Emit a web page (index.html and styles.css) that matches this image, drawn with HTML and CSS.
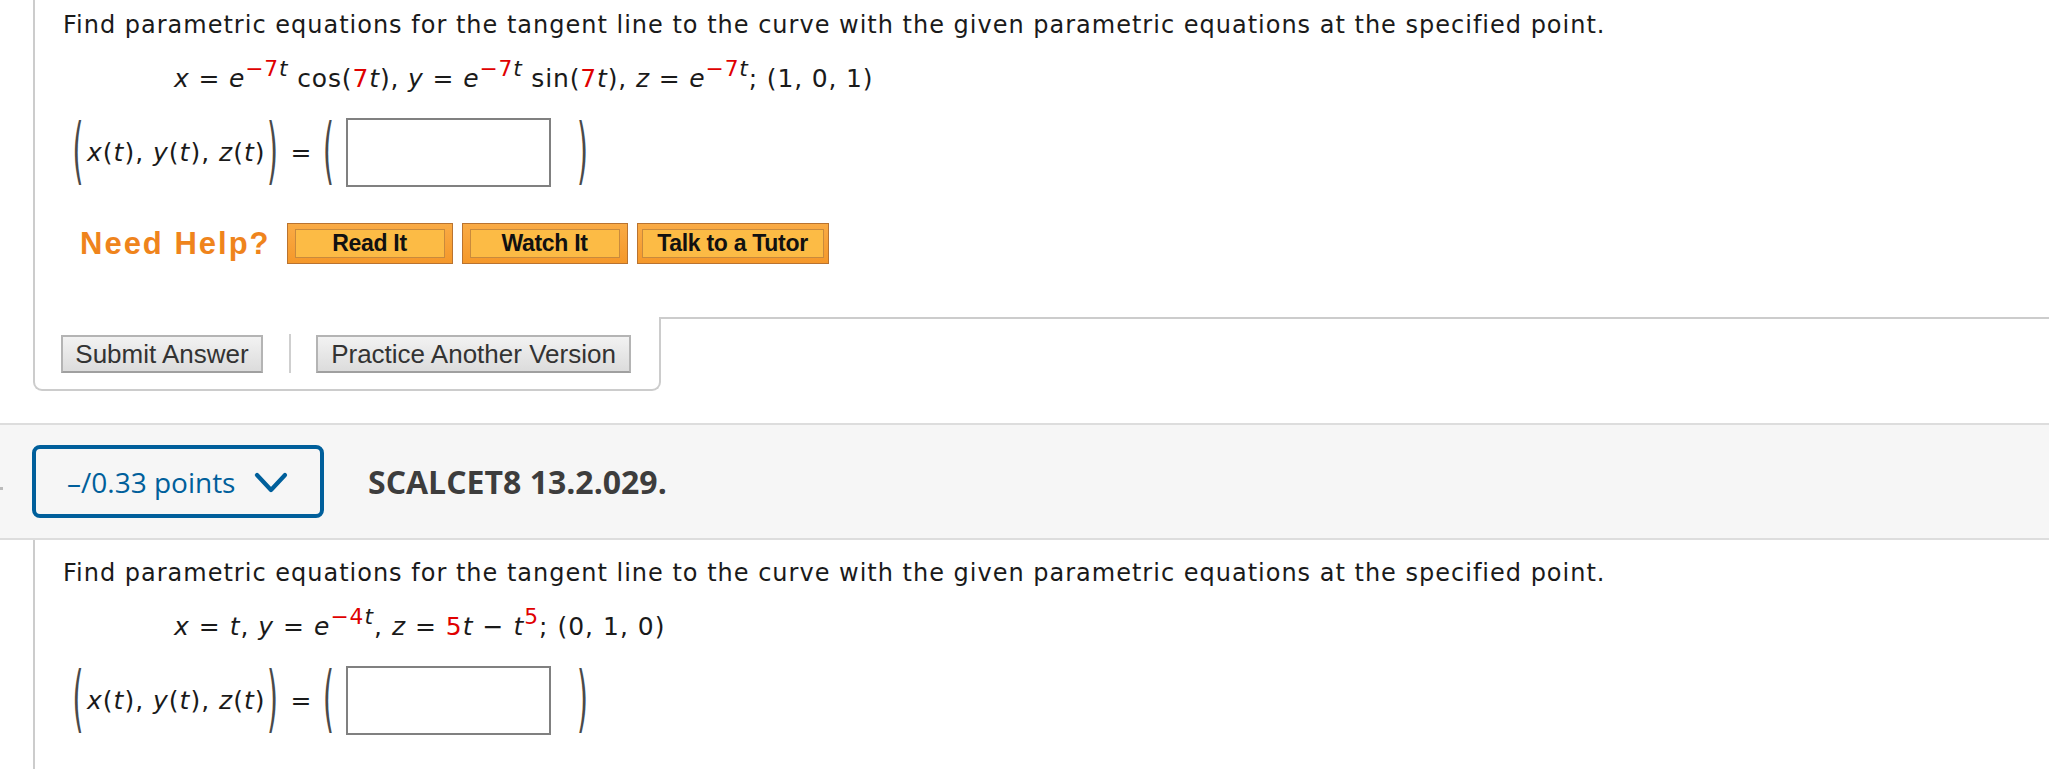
FILE: index.html
```html
<!DOCTYPE html>
<html>
<head>
<meta charset="utf-8">
<link rel="stylesheet" href="styles.css">
</head>
<body>
<div class="q q1">
  <div class="qbody">
    <p class="prompt">Find parametric equations for the tangent line to the curve with the given parametric equations at the specified point.</p>
    <div class="eq"><i>x</i> = <i>e</i><span class="sup"><span class="red">−7</span><i>t</i></span> cos(<span class="red">7</span><i>t</i>), <i>y</i> = <i>e</i><span class="sup"><span class="red">−7</span><i>t</i></span> sin(<span class="red">7</span><i>t</i>), <i>z</i> = <i>e</i><span class="sup"><span class="red">−7</span><i>t</i></span>; (1, 0, 1)</div>
    <div class="ans">
      <span class="paren p1">(</span><span class="mtext"><i>x</i>(<i>t</i>), <i>y</i>(<i>t</i>), <i>z</i>(<i>t</i>)</span><span class="paren p2">)</span>
      <span class="equals">=</span>
      <span class="paren p3">(</span><span class="box"></span><span class="paren p4">)</span>
    </div>
    <div class="help">
      <span class="need">Need Help?</span>
      <span class="hbtn"><span class="hin">Read It</span></span>
      <span class="hbtn"><span class="hin">Watch It</span></span>
      <span class="hbtn tutor"><span class="hin">Talk to a Tutor</span></span>
    </div>
  </div>
  <div class="footrow">
    <div class="actions">
      <span class="gbtn submit">Submit Answer</span>
      <span class="sep"></span>
      <span class="gbtn practice">Practice Another Version</span>
    </div>
    <div class="fill"></div>
  </div>
</div>

<div class="band">
  <span class="tick"></span>
  <span class="points">–/0.33 points
    <svg class="chev" width="34" height="22" viewBox="0 0 34 22"><path d="M3 3 L17 18 L31 3" fill="none" stroke="#005f9b" stroke-width="4.2" stroke-linecap="round" stroke-linejoin="round"/></svg>
  </span>
  <span class="qid">SCALCET8 13.2.029.</span>
</div>

<div class="q q2">
  <div class="qbody">
    <p class="prompt">Find parametric equations for the tangent line to the curve with the given parametric equations at the specified point.</p>
    <div class="eq"><i>x</i> = <i>t</i>, <i>y</i> = <i>e</i><span class="sup"><span class="red">−4</span><i>t</i></span>, <i>z</i> = <span class="red">5</span><i>t</i> − <i>t</i><span class="sup"><span class="red">5</span></span>; (0, 1, 0)</div>
    <div class="ans">
      <span class="paren p1">(</span><span class="mtext"><i>x</i>(<i>t</i>), <i>y</i>(<i>t</i>), <i>z</i>(<i>t</i>)</span><span class="paren p2">)</span>
      <span class="equals">=</span>
      <span class="paren p3">(</span><span class="box"></span><span class="paren p4">)</span>
    </div>
  </div>
</div>
</body>
</html>
```

FILE: styles.css
```css
html, body {
  margin: 0;
  padding: 0;
  background: #fff;
  overflow: hidden;
}
body {
  font-family: "DejaVu Sans", Verdana, sans-serif;
  color: #222;
  width: 2049px;
  height: 769px;
}
.q {
  margin-left: 33px;
}
.qbody {
  border-left: 2px solid #cccccc;
  padding: 10px 0 53px 28px;
}
.q2 .qbody {
  padding-top: 18px;
  padding-bottom: 40px;
}
.prompt {
  margin: 0;
  font-size: 24px;
  line-height: 30px;
  letter-spacing: 1px;
  color: #1a1a1a;
}
.eq {
  margin: 24px 0 0 111px;
  font-size: 25px;
  line-height: 30px;
  letter-spacing: 1px;
  color: #1a1a1a;
  white-space: nowrap;
}
.q1 .eq {
  letter-spacing: 0.85px;
}
.eq i, .mtext i {
  font-style: italic;
}
.sup {
  font-size: 0.87em;
  vertical-align: 11px;
  line-height: 0;
}
.red {
  color: #e00000;
}
.ans {
  margin-top: 24px;
  display: flex;
  align-items: center;
  font-size: 25px;
  letter-spacing: 1px;
  color: #1a1a1a;
}
.paren {
  display: inline-block;
  font-size: 28px;
  letter-spacing: 0;
  color: #4a4a4a;
  transform: scaleY(2.6);
  width: 14px;
  text-align: center;
  line-height: 30px;
}
.p1 {
  margin-left: 8px;
}
.mtext {
  margin-left: 2px;
}
.p2 {
  margin-left: 0;
}
.equals {
  margin-left: 11px;
  letter-spacing: 0;
}
.p3 {
  margin-left: 10px;
}
.box {
  display: inline-block;
  box-sizing: border-box;
  width: 205px;
  height: 69px;
  border: 2px solid #808080;
  background: #fff;
  margin-left: 11px;
}
.p4 {
  margin-left: 24px;
}
.help {
  margin-top: 36px;
  display: flex;
  align-items: center;
  margin-left: 17px;
}
.need {
  font-family: "Liberation Sans", Arial, sans-serif;
  font-weight: bold;
  font-size: 31px;
  letter-spacing: 2px;
  color: #ef841c;
  margin-right: 16px;
}
.hbtn {
  display: inline-flex;
  box-sizing: border-box;
  width: 166px;
  height: 41px;
  border: 1px solid #b97330;
  background: linear-gradient(#f9ab45, #f5982a);
  padding: 5px 7px;
  margin-right: 9px;
}
.hbtn.tutor {
  width: 192px;
  padding: 5px 4px;
}
.hin {
  flex: 1;
  display: flex;
  align-items: center;
  justify-content: center;
  border: 1px solid #c98a3c;
  background: #fcbb45;
  font-family: "Liberation Sans", Arial, sans-serif;
  font-weight: bold;
  font-size: 23px;
  color: #111;
  letter-spacing: -0.3px;
}
.footrow {
  display: flex;
  align-items: flex-start;
}
.actions {
  flex: none;
  width: 598px;
  border-left: 2px solid #cccccc;
  border-right: 2px solid #cccccc;
  border-bottom: 2px solid #cccccc;
  border-radius: 0 0 9px 9px;
  padding: 17px 0 16px 26px;
  display: flex;
  align-items: center;
}
.fill {
  flex: 1;
  border-top: 2px solid #cccccc;
  margin-left: -2px;
}
.gbtn {
  display: inline-block;
  box-sizing: border-box;
  height: 38px;
  line-height: 34px;
  border: 2px solid #b4b4b4;
  border-bottom-color: #a0a0a0;
  background: linear-gradient(#f2f2f2, #dcdcdc);
  font-family: "Liberation Sans", Arial, sans-serif;
  font-size: 26px;
  color: #333;
  text-align: center;
}
.submit {
  width: 202px;
}
.practice {
  width: 315px;
}
.sep {
  display: inline-block;
  width: 2px;
  height: 39px;
  background: #cfcfcf;
  margin: 0 25px 0 26px;
}
.band {
  margin-top: 32px;
  height: 113px;
  border-top: 2px solid #dddddd;
  border-bottom: 2px solid #dddddd;
  background: #f6f6f6;
  display: flex;
  align-items: center;
}
.tick {
  width: 3px;
  height: 3px;
  background: #bbb;
  margin-right: 29px;
  margin-top: 14px;
}
.points {
  box-sizing: border-box;
  width: 292px;
  height: 73px;
  border: 4px solid #005f9b;
  border-radius: 8px;
  display: flex;
  align-items: center;
  padding-left: 31px;
  font-family: "Open Sans", "Noto Sans", sans-serif;
  font-size: 28px;
  color: #005f9b;
}
.chev {
  margin-left: 19px;
  margin-top: 3px;
}
.qid {
  margin-left: 44px;
  font-family: "Open Sans", "Noto Sans", sans-serif;
  font-weight: bold;
  font-size: 32px;
  color: #3d3d3d;
}
```
